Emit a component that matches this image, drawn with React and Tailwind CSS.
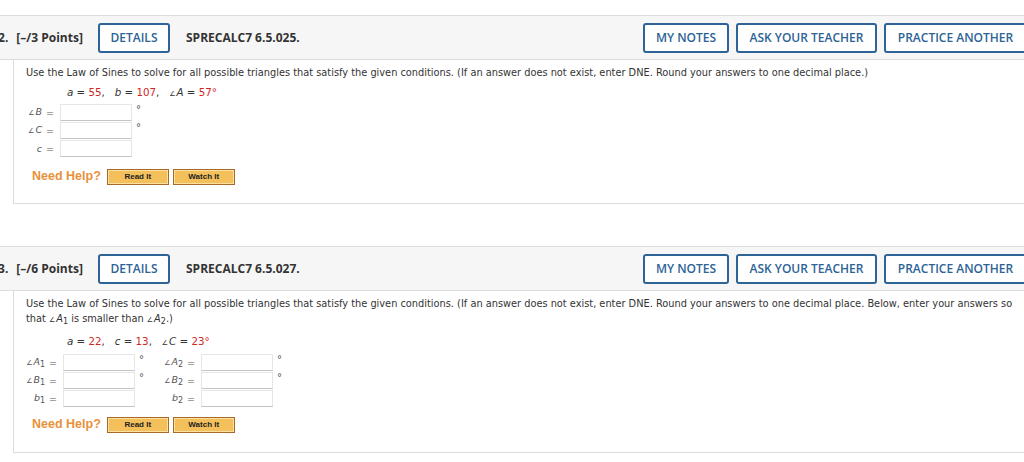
import React from 'react'

function HeaderButton({ children, className = '' }) {
  return (
    <div
      className={`flex h-[30px] shrink-0 items-center justify-center whitespace-nowrap rounded-[3px] border-2 border-[#2d6396] bg-white text-[12px] font-semibold text-[#2d6396] ${className}`}
    >
      {children}
    </div>
  )
}

function Header({ num, points, code }) {
  return (
    <div className="flex h-[45px] items-center border-y border-[#dcdcdc] bg-[#f6f6f6] font-['Open_Sans',sans-serif]">
      <div className="-ml-[2px] w-[100px] shrink-0 whitespace-nowrap text-[12px] font-bold text-[#333]">
        {num}.<span className="ml-[8px]">[–/{points} Points]</span>
      </div>
      <HeaderButton className="w-[72px]">DETAILS</HeaderButton>
      <div className="ml-[16px] text-[12px] font-bold text-[#333]">{code}</div>
      <div className="ml-auto -mr-[3px] flex gap-[7px]">
        <HeaderButton className="w-[86px]">MY NOTES</HeaderButton>
        <HeaderButton className="w-[141px]">ASK YOUR TEACHER</HeaderButton>
        <HeaderButton className="w-[143px]">PRACTICE ANOTHER</HeaderButton>
      </div>
    </div>
  )
}

function HelpButton({ children }) {
  return (
    <div className="flex h-[16px] w-[62px] items-center justify-center border border-[#a56a2a] bg-[#f4c05c] font-['Liberation_Sans',sans-serif] text-[8px] font-bold text-[#222] shadow-[inset_0_0_0_1px_#fbe0a0]">
      {children}
    </div>
  )
}

function HelpRow() {
  return (
    <div className="flex items-center gap-[4px]">
      <span className="mr-[2px] font-['Liberation_Sans',sans-serif] text-[12.5px] font-bold text-[#e8913a]">
        Need Help?
      </span>
      <HelpButton>Read It</HelpButton>
      <HelpButton>Watch It</HelpButton>
    </div>
  )
}

// angle label like ∠A₁
function Lbl({ children, sub, angle = true }) {
  return (
    <span className="italic">
      {angle && <span className="mr-[1px] text-[7px] not-italic">∠</span>}
      {children}
      {sub && <sub className="text-[8px] leading-none not-italic">{sub}</sub>}
    </span>
  )
}

function Row({ label, deg, labelW }) {
  return (
    <div className="flex h-[18px] items-center leading-none">
      <div className={`${labelW} flex items-center justify-end`}>
        {label}
        <span className="ml-[4px]">=</span>
      </div>
      <div className="ml-[6px] h-[17px] w-[72px] shrink-0 border border-[#e6e6e6] border-b-[#c4c4c4] bg-white" />
      <span className={`-mt-[5px] ml-[4px] w-[6px] text-[10px] ${deg ? '' : 'invisible'}`}>°</span>
    </div>
  )
}

const red = 'text-[#d0271f]'

export default function App() {
  return (
    <div className="h-[462px] w-[1024px] overflow-hidden bg-white pt-[15px] font-['DejaVu_Sans',sans-serif] text-[#333]">
      {/* question 2 */}
      <Header num="2" points="3" code="SPRECALC7 6.5.025." />
      <div className="ml-[13px] h-[144px] border-b border-l border-[#dcdcdc] pl-[12px] pt-[6px] text-[9.8px]">
        <div className="leading-[14px]">
          Use the Law of Sines to solve for all possible triangles that satisfy the given conditions. (If an answer
          does not exist, enter DNE. Round your answers to one decimal place.)
        </div>
        <div className="ml-[41px] mt-[5px] text-[10.3px]">
          <span className="italic">a</span> = <span className={red}>55</span>,&nbsp;&nbsp;&nbsp;
          <span className="italic">b</span> = <span className={red}>107</span>,&nbsp;&nbsp;&nbsp;
          <Lbl>A</Lbl> = <span className={red}>57°</span>
        </div>
        <div className="mt-[3px] text-[9.5px] text-[#555]">
          <Row label={<Lbl>B</Lbl>} deg labelW="w-[28px]" />
          <Row label={<Lbl>C</Lbl>} deg labelW="w-[28px]" />
          <Row label={<Lbl angle={false}>c</Lbl>} labelW="w-[28px]" />
        </div>
        <div className="ml-[6px] mt-[10px]">
          <HelpRow />
        </div>
      </div>

      <div className="h-[42px]" />

      {/* question 3 */}
      <Header num="3" points="6" code="SPRECALC7 6.5.027." />
      <div className="ml-[13px] h-[162px] border-b border-l border-[#dcdcdc] pl-[12px] pt-[5px] text-[9.8px]">
        <div className="leading-[15px]">
          Use the Law of Sines to solve for all possible triangles that satisfy the given conditions. (If an answer
          does not exist, enter DNE. Round your answers to one decimal place. Below, enter your answers so
          <br />
          that <Lbl sub="1">A</Lbl> is smaller than <Lbl sub="2">A</Lbl>.)
        </div>
        <div className="ml-[41px] mt-[6px] text-[10.3px]">
          <span className="italic">a</span> = <span className={red}>22</span>,&nbsp;&nbsp;&nbsp;
          <span className="italic">c</span> = <span className={red}>13</span>,&nbsp;&nbsp;&nbsp;
          <Lbl>C</Lbl> = <span className={red}>23°</span>
        </div>
        <div className="mt-[4px] flex text-[9.5px] text-[#555]">
          <div>
            <Row label={<Lbl sub="1">A</Lbl>} deg labelW="w-[31px]" />
            <Row label={<Lbl sub="1">B</Lbl>} deg labelW="w-[31px]" />
            <Row label={<Lbl sub="1" angle={false}>b</Lbl>} labelW="w-[31px]" />
          </div>
          <div className="ml-[14px]">
            <Row label={<Lbl sub="2">A</Lbl>} deg labelW="w-[36px]" />
            <Row label={<Lbl sub="2">B</Lbl>} deg labelW="w-[36px]" />
            <Row label={<Lbl sub="2" angle={false}>b</Lbl>} labelW="w-[36px]" />
          </div>
        </div>
        <div className="ml-[6px] mt-[8px]">
          <HelpRow />
        </div>
      </div>
    </div>
  )
}
